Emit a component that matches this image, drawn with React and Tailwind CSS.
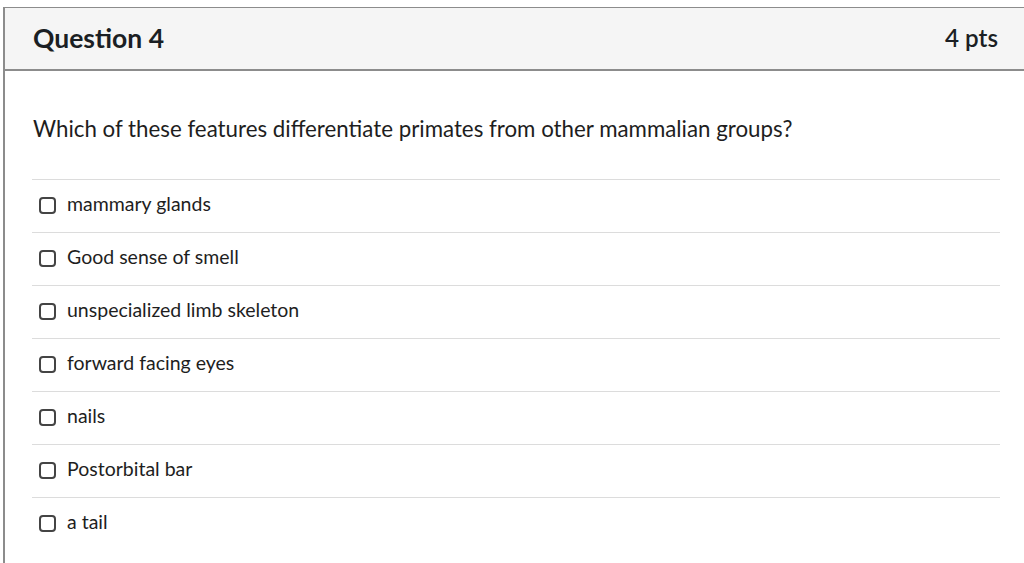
const answers = [
  "mammary glands",
  "Good sense of smell",
  "unspecialized limb skeleton",
  "forward facing eyes",
  "nails",
  "Postorbital bar",
  "a tail",
];

export default function App() {
  return (
    <div className="w-[1024px] h-[563px] overflow-hidden bg-white pt-[7px] pl-[3px] font-['Lato',sans-serif] text-[#2d3b45]">
      <div className="border-t border-l-2 border-[#8c8c8c] h-full">
        {/* header */}
        <div className="h-[63px] bg-[#f5f5f5] border-b-2 border-[#8c8c8c] flex items-center justify-between pl-[28px] pr-[26px] text-[#1b1f24]">
          <h2 className="text-[26.5px] font-bold leading-none">Question 4</h2>
          <span className="text-[24.2px] font-semibold leading-none">4 pts</span>
        </div>

        {/* body */}
        <div className="pl-[27px] pr-[24px]">
          <p className="pt-[43px] pb-[35px] pl-[1px] text-[22.3px] leading-[30px] text-[#1e1e1e]">
            Which of these features differentiate primates from other mammalian groups?
          </p>
          <div>
            {answers.map((a) => (
              <label
                key={a}
                className="flex items-center h-[53px] border-t border-[#dcdcdc] pl-[7px] pb-[5px] gap-[11px] text-[19.5px] text-[#1e1e1e]"
              >
                <span className="w-[17px] h-[17px] rounded-[4px] border-2 border-[#444] bg-white shrink-0 mt-[3px]"></span>
                {a}
              </label>
            ))}
          </div>
        </div>
      </div>
    </div>
  );
}
